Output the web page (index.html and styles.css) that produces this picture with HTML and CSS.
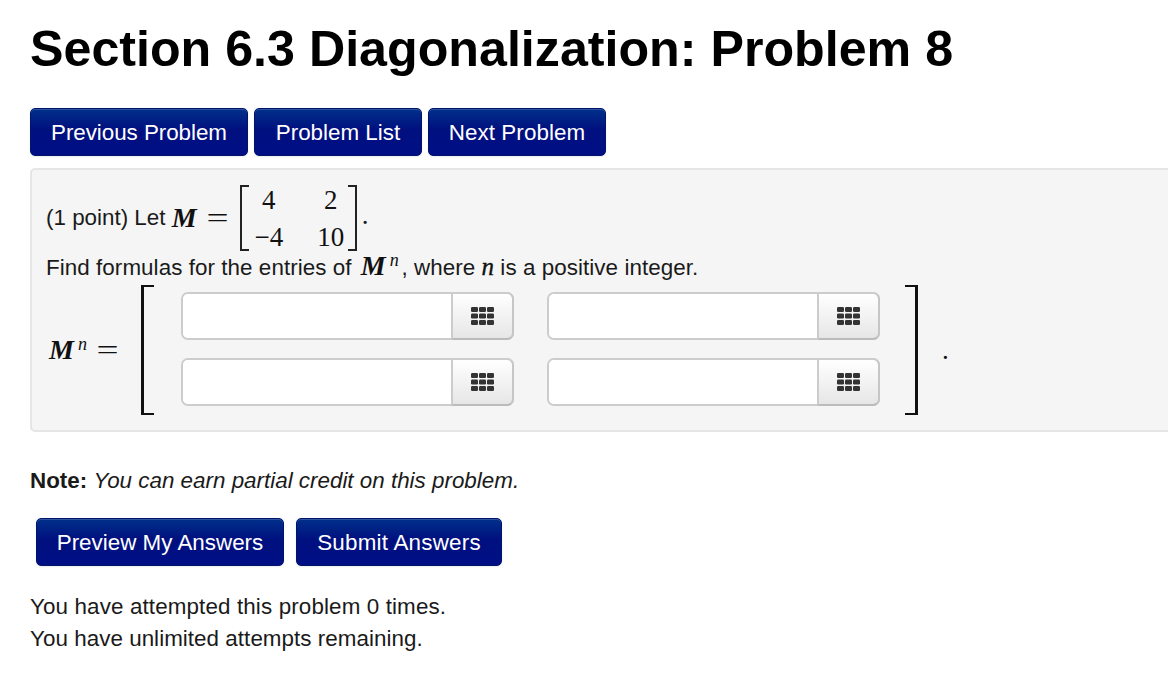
FILE: index.html
```html
<!DOCTYPE html>
<html lang="en">
<head>
<meta charset="utf-8">
<title>Section 6.3 Diagonalization: Problem 8</title>
<link rel="stylesheet" href="styles.css">
</head>
<body>
<main class="page">
  <h1 class="title">Section 6.3 Diagonalization: Problem 8</h1>
  <nav class="nav">
    <a class="btn btn-prev">Previous Problem</a>
    <a class="btn btn-list">Problem List</a>
    <a class="btn btn-next">Next Problem</a>
  </nav>
  <section class="panel">
    <div class="line-let">
      <span>(1 point) Let&nbsp;</span><span class="m">M</span><span class="eq">=</span>
      <span class="small-matrix">
        <span class="cell">4</span><span class="cell">2</span>
        <span class="cell">−4</span><span class="cell">10</span>
      </span>
      <span class="dot">.</span>
    </div>
    <div class="line-find">Find formulas for the entries of&nbsp;<span class="m m-find">M</span><sup class="n">n</sup><span class="comma">,</span> where <span class="n-inline">n</span> is a positive integer.</div>
    <div class="line-matrix">
      <div class="label"><span class="m">M</span><sup class="n">n</sup><span class="eq">=</span></div>
      <div class="big-matrix">
        <div class="answer"><input class="field" type="text"><span class="addon"><svg class="grid-icon" viewBox="0 0 23 18"><rect x="0" y="0" width="7" height="5" rx="1.2"/><rect x="8" y="0" width="7" height="5" rx="1.2"/><rect x="16" y="0" width="7" height="5" rx="1.2"/><rect x="0" y="6.5" width="7" height="5" rx="1.2"/><rect x="8" y="6.5" width="7" height="5" rx="1.2"/><rect x="16" y="6.5" width="7" height="5" rx="1.2"/><rect x="0" y="13" width="7" height="5" rx="1.2"/><rect x="8" y="13" width="7" height="5" rx="1.2"/><rect x="16" y="13" width="7" height="5" rx="1.2"/></svg></span></div>
        <div class="answer"><input class="field" type="text"><span class="addon"><svg class="grid-icon" viewBox="0 0 23 18"><rect x="0" y="0" width="7" height="5" rx="1.2"/><rect x="8" y="0" width="7" height="5" rx="1.2"/><rect x="16" y="0" width="7" height="5" rx="1.2"/><rect x="0" y="6.5" width="7" height="5" rx="1.2"/><rect x="8" y="6.5" width="7" height="5" rx="1.2"/><rect x="16" y="6.5" width="7" height="5" rx="1.2"/><rect x="0" y="13" width="7" height="5" rx="1.2"/><rect x="8" y="13" width="7" height="5" rx="1.2"/><rect x="16" y="13" width="7" height="5" rx="1.2"/></svg></span></div>
        <div class="answer"><input class="field" type="text"><span class="addon"><svg class="grid-icon" viewBox="0 0 23 18"><rect x="0" y="0" width="7" height="5" rx="1.2"/><rect x="8" y="0" width="7" height="5" rx="1.2"/><rect x="16" y="0" width="7" height="5" rx="1.2"/><rect x="0" y="6.5" width="7" height="5" rx="1.2"/><rect x="8" y="6.5" width="7" height="5" rx="1.2"/><rect x="16" y="6.5" width="7" height="5" rx="1.2"/><rect x="0" y="13" width="7" height="5" rx="1.2"/><rect x="8" y="13" width="7" height="5" rx="1.2"/><rect x="16" y="13" width="7" height="5" rx="1.2"/></svg></span></div>
        <div class="answer"><input class="field" type="text"><span class="addon"><svg class="grid-icon" viewBox="0 0 23 18"><rect x="0" y="0" width="7" height="5" rx="1.2"/><rect x="8" y="0" width="7" height="5" rx="1.2"/><rect x="16" y="0" width="7" height="5" rx="1.2"/><rect x="0" y="6.5" width="7" height="5" rx="1.2"/><rect x="8" y="6.5" width="7" height="5" rx="1.2"/><rect x="16" y="6.5" width="7" height="5" rx="1.2"/><rect x="0" y="13" width="7" height="5" rx="1.2"/><rect x="8" y="13" width="7" height="5" rx="1.2"/><rect x="16" y="13" width="7" height="5" rx="1.2"/></svg></span></div>
      </div>
      <span class="end-dot">.</span>
    </div>
  </section>
  <p class="note"><b>Note:</b> <i>You can earn partial credit on this problem.</i></p>
  <div class="actions">
    <a class="btn btn-preview">Preview My Answers</a>
    <a class="btn btn-submit">Submit Answers</a>
  </div>
  <div class="status">
    <p class="status-line status-first">You have attempted this problem 0 times.</p>
    <p class="status-line">You have unlimited attempts remaining.</p>
  </div>
</main>
</body>
</html>
```
FILE: styles.css
```css
html, body { margin: 0; padding: 0; background: #fff; }
body {
  width: 1168px;
  height: 690px;
  overflow: hidden;
  font-family: "Liberation Sans", Arial, sans-serif;
  font-size: 22.4px;
  color: #1a1a1a;
}
.page { padding: 0 0 0 30px; }
.title {
  margin: 0;
  padding-top: 21px;
  height: 108px;
  box-sizing: border-box;
  font-size: 50.2px;
  line-height: 56px;
  font-weight: 700;
  color: #000;
  white-space: nowrap;
}
.nav { display: flex; gap: 6px; }
.btn {
  display: inline-flex;
  align-items: center;
  justify-content: center;
  box-sizing: border-box;
  height: 48px;
  padding-top: 1px;
  border: 1px solid #00146b;
  border-radius: 5px;
  background: linear-gradient(#00308a, #00107f 45%, #000f85);
  box-shadow: inset 0 1px 0 rgba(255,255,255,.18), 0 1px 2px rgba(0,0,0,.08);
  color: #fff;
  white-space: nowrap;
}
.btn-prev { width: 218px; letter-spacing: -.05px; }
.btn-list { width: 168px; }
.btn-next { width: 178px; letter-spacing: .06px; }
.btn-preview { width: 248px; }
.btn-submit { width: 206px; letter-spacing: .22px; }
.panel {
  box-sizing: border-box;
  width: 1180px;
  height: 264px;
  margin-top: 12px;
  padding: 12px 14px 0;
  background: #f5f5f5;
  border: 2px solid #e6e6e6;
  border-radius: 5px;
}
.m, .n, .n-inline, .cell, .eq, .dot { font-family: "Liberation Serif", "Times New Roman", serif; }
.m {
  font-style: italic;
  font-weight: 700;
  font-size: 28px;
  color: #111;
}
.m-find { margin-left: 3px; }
.n { font-style: italic; font-size: 18px; line-height: 0; margin-left: 4px; vertical-align: 9px; color: #111; }
.n-inline { font-style: italic; font-size: 25px; color: #111; -webkit-text-stroke: .35px #111; }
.eq {
  display: inline-block;
  font-size: 27px;
  margin: 0 3px 0 13px;
  transform: scaleX(1.45);
  color: #111;
}
.line-let { display: flex; align-items: center; height: 68px; padding-top: 4px; box-sizing: border-box; }
.small-matrix {
  position: relative;
  display: grid;
  grid-template-columns: 40px 40px;
  grid-auto-rows: 30px;
  column-gap: 22px;
  row-gap: 7px;
  align-content: center;
  justify-items: center;
  align-items: center;
  box-sizing: border-box;
  width: 117px;
  height: 66px;
  margin-left: 12px;
  padding-left: 7px;
  border-left: 2px solid #222;
  border-right: 2px solid #222;
}
.small-matrix::before, .small-matrix::after {
  content: "";
  position: absolute;
  top: 0;
  bottom: 0;
  width: 7px;
  border-top: 2px solid #222;
  border-bottom: 2px solid #222;
}
.small-matrix::before { left: 0; }
.small-matrix::after { right: 0; }
.cell { font-size: 27px; line-height: 30px; color: #111; }
.dot { font-size: 27px; margin-left: 5px; padding-bottom: 6px; }
.line-find { line-height: 32px; white-space: nowrap; letter-spacing: .06px; }
.comma { margin-left: 2.5px; }
.line-matrix { display: flex; align-items: center; height: 130px; margin-top: 1px; }
.label { width: 95px; padding-left: 3px; box-sizing: border-box; white-space: nowrap; }
.big-matrix {
  position: relative;
  display: grid;
  grid-template-columns: 333px 333px;
  column-gap: 33px;
  row-gap: 18px;
  align-content: start;
  box-sizing: border-box;
  width: 777px;
  height: 130px;
  padding: 7px 0 0 37px;
  border-left: 3px solid #111;
  border-right: 3px solid #111;
}
.big-matrix::before, .big-matrix::after {
  content: "";
  position: absolute;
  top: 0;
  bottom: 0;
  width: 10px;
  border-top: 2px solid #111;
  border-bottom: 2px solid #111;
}
.big-matrix::before { left: 0; }
.big-matrix::after { right: 0; }
.answer {
  display: flex;
  height: 48px;
  box-sizing: border-box;
  border: 2px solid #ccc;
  border-radius: 7px;
  background: #fff;
}
.field {
  flex: 1;
  min-width: 0;
  border: 0;
  padding: 0;
  margin: 0;
  border-radius: 5px 0 0 5px;
  background: #fff;
  outline: none;
}
.addon {
  flex: none;
  display: flex;
  align-items: center;
  justify-content: center;
  box-sizing: border-box;
  width: 63px;
  margin: -2px -2px -2px 0;
  border: 2px solid #ccc;
  border-bottom-color: #bbb;
  border-right-color: #c6c6c6;
  border-radius: 0 7px 7px 0;
  background: linear-gradient(#fff, #e6e6e6);
}
.grid-icon { width: 23px; height: 18px; fill: #333; display: block; }
.end-dot { font-family: "Liberation Serif", serif; font-size: 27px; margin-left: 24px; color: #111; }
.note { margin: 36px 0 0; line-height: 26px; }
.actions { display: flex; gap: 12px; margin: 24px 0 0 6px; }
.status { margin-top: 25px; }
.status-line { margin: 0; line-height: 32px; letter-spacing: .04px; }
.status-first { letter-spacing: .125px; }
```
